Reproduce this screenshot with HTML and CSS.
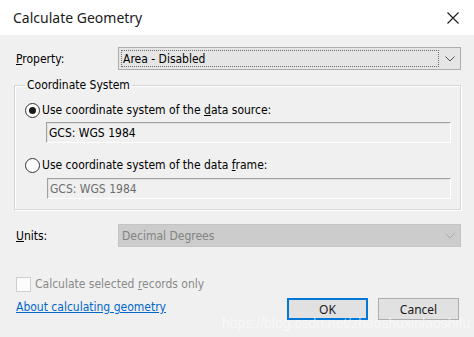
FILE: index.html
```html
<!DOCTYPE html>
<html lang="en">
<head>
    <meta charset="UTF-8">
    <title>Calculate Geometry</title>
    <link rel="stylesheet" href="styles.css">
</head>
<body>
    <div class="dialog">
        <!-- Window title bar -->
        <div class="titlebar">
            <span class="title">Calculate Geometry</span>
            <svg class="close" width="12" height="12" viewBox="0 0 12 12">
                <path d="M0.5 0.5 L11.5 11.5 M11.5 0.5 L0.5 11.5" stroke="#1a1a1a" stroke-width="1.1" fill="none"/>
            </svg>
        </div>

        <div class="content">
            <div class="field-row">
                <label class="field-label"><u>P</u>roperty:</label>
                <div class="combo combo-active">
                    <span class="combo-text">Area - Disabled</span>
                    <span class="combo-arrow">
                        <svg width="10" height="6" viewBox="0 0 10 6"><path d="M0.5 0.5 L5 5 L9.5 0.5" stroke="#555" stroke-width="1" fill="none"/></svg>
                    </span>
                </div>
            </div>

            <fieldset class="group">
                <legend>Coordinate System</legend>
                <div class="option">
                    <span class="radio checked"></span>
                    <span>Use coordinate system of the <u>d</u>ata source:</span>
                </div>
                <div class="textbox">GCS: WGS 1984</div>
                <div class="option option-second">
                    <span class="radio"></span>
                    <span>Use coordinate system of the data <u>f</u>rame:</span>
                </div>
                <div class="textbox textbox-disabled">GCS: WGS 1984</div>
            </fieldset>

            <div class="field-row units-row">
                <label class="field-label"><u>U</u>nits:</label>
                <div class="combo combo-disabled">
                    <span class="combo-text">Decimal Degrees</span>
                    <span class="combo-arrow">
                        <svg width="10" height="6" viewBox="0 0 10 6"><path d="M0.5 0.5 L5 5 L9.5 0.5" stroke="#a8a8a8" stroke-width="1" fill="none"/></svg>
                    </span>
                </div>
            </div>

            <div class="check-row">
                <span class="checkbox"></span>
                <span>Calculate selected <u>r</u>ecords only</span>
            </div>

            <div class="footer-row">
                <a href="#" class="help-link">About calculating geometry</a>
                <div class="buttons">
                    <button class="btn btn-default">OK</button>
                    <button class="btn">Cancel</button>
                </div>
            </div>
        </div>

        <!-- Blog watermark over the screenshot -->
        <div class="watermark">https://blog.csdn.net/zhaoshuxinlaoshifu</div>
    </div>
</body>
</html>
```

FILE: styles.css
```css
html, body {
    margin: 0;
    padding: 0;
}

body {
    width: 474px;
    height: 337px;
    overflow: hidden;
    background: #f0f0f0;
    font-family: 'DejaVu Sans Condensed', 'DejaVu Sans', sans-serif;
    font-size: 12px;
    color: #000;
}

.dialog {
    position: relative;
    height: 337px;
}

/* Title bar */
.titlebar {
    height: 35px;
    background: #fff;
    display: flex;
    align-items: center;
    justify-content: space-between;
    padding: 0 15px 0 13px;
    box-sizing: border-box;
}

.title {
    font-family: 'Noto Sans', sans-serif;
    font-size: 14px;
    color: #1a1a1a;
}

.close {
    display: block;
}

.content {
    padding: 12px 13px 0 16px;
}

/* Label + combo rows */
.field-row {
    display: flex;
    align-items: center;
    height: 23px;
}

.field-label {
    width: 102px;
    flex: none;
}

.combo {
    flex: 1;
    height: 23px;
    box-sizing: border-box;
    display: flex;
    align-items: stretch;
}

.combo-text {
    flex: 1;
    display: flex;
    align-items: center;
    padding-left: 3px;
}

.combo-arrow {
    width: 21px;
    display: flex;
    align-items: center;
    justify-content: center;
}

.combo-active {
    background: #e5e5e5;
    border: 1px solid #adadad;
}

.combo-active .combo-text {
    margin: 2px 0 2px 2px;
    padding-left: 1px;
    border: 1px dotted #6e6e6e;
}

.combo-disabled {
    background: #cccccc;
    border: 1px solid #c4c4c4;
    color: #838383;
}

/* Group box */
.group {
    margin: 8px 0 0 -2px;
    padding: 0 9px 10px 10px;
    border: 1px solid #d5d5d5;
    box-shadow: inset 1px 1px 0 #fff, 1px 1px 0 #fff;
}

.group legend {
    padding: 0 2px;
    margin-left: 0;
    line-height: 14px;
}

.option {
    display: flex;
    align-items: center;
    height: 16px;
    margin-top: 10px;
}

.option-second {
    margin-top: 14px;
}

.radio {
    width: 13px;
    height: 13px;
    border: 1px solid #333;
    border-radius: 50%;
    background: #fff;
    margin-right: 2px;
    display: flex;
    align-items: center;
    justify-content: center;
    flex: none;
}

.radio.checked::after {
    content: '';
    width: 7px;
    height: 7px;
    border-radius: 50%;
    background: #1a1a1a;
}

.textbox {
    margin: 4px 0 0 21px;
    height: 21px;
    box-sizing: border-box;
    border: 1px solid;
    border-color: #a0a0a0 #fff #fff #a0a0a0;
    box-shadow: inset 1px 1px 0 #e3e3e3;
    padding-left: 2px;
    display: flex;
    align-items: center;
}

.textbox-disabled {
    margin-top: 5px;
    margin-left: 22px;
    color: #6d6d6d;
}

.units-row {
    margin-top: 14px;
}

/* Disabled checkbox */
.check-row {
    display: flex;
    align-items: center;
    height: 16px;
    margin-top: 29px;
    color: #8a8a8a;
}

.checkbox {
    width: 13px;
    height: 13px;
    border: 1px solid #cfcfcf;
    background: #fcfcfc;
    margin-right: 4px;
    flex: none;
}

.footer-row {
    display: flex;
    justify-content: space-between;
    align-items: flex-start;
    margin-top: 6px;
}

.help-link {
    color: #0066cc;
    text-decoration: underline;
    line-height: 14px;
    margin-top: 2px;
}

.buttons {
    display: flex;
    gap: 10px;
    margin-right: 2px;
}

.btn {
    width: 81px;
    height: 22px;
    box-sizing: border-box;
    background: #e1e1e1;
    border: 1px solid #adadad;
    font-family: 'Noto Sans', sans-serif;
    font-size: 12px;
    color: #1a1a1a;
    padding: 0;
}

.btn-default {
    border: 2px solid #0078d7;
}

.watermark {
    position: absolute;
    left: 222px;
    top: 315px;
    font-family: 'Liberation Sans', sans-serif;
    font-size: 14px;
    color: rgba(255, 255, 255, 0.55);
    white-space: nowrap;
}
```
